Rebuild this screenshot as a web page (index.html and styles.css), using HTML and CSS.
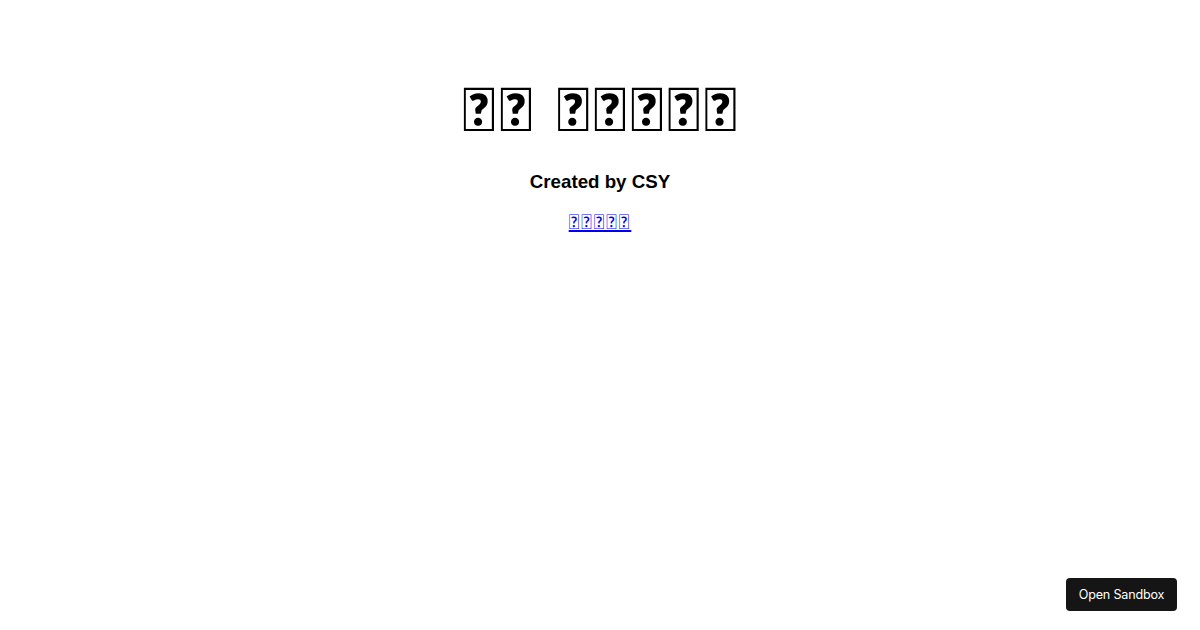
FILE: index.html
```html
<!DOCTYPE html>
<html lang="ko">
<head>
<meta charset="utf-8">
<title>Page</title>
<link rel="stylesheet" href="styles.css">
</head>
<body>
<main class="page">
  <h1 class="title">&#xE000;&#xE001; &#xE002;&#xE003;&#xE004;&#xE005;&#xE006;</h1>
  <h3 class="byline">Created by CSY</h3>
  <p class="links"><a class="link" href="#">&#xE007;&#xE008;&#xE009;&#xE00A;&#xE00B;</a></p>
</main>
<a class="sandbox-btn" href="#">Open Sandbox</a>
</body>
</html>
```
FILE: styles.css
```css
html, body {
  margin: 0;
  padding: 0;
  background: #ffffff;
}
body {
  font-family: "Liberation Sans", Arial, sans-serif;
  color: #000000;
}
.page {
  padding: 40px 8px 0;
  text-align: center;
}
.title {
  font-family: Lato, sans-serif;
  font-size: 60px;
  line-height: 72px;
  font-weight: bold;
  letter-spacing: 4px;
  word-spacing: 2px;
  margin: 32px 0 27px;
  padding-left: 4px;
}
.byline {
  font-size: 18.72px;
  font-weight: bold;
  margin: 0 0 16px;
}
.links {
  font-family: Lato, sans-serif;
  font-size: 20px;
  line-height: 24px;
  margin: 0;
}
.link {
  color: #0000ee;
  text-decoration: underline;
  letter-spacing: 1.9px;
}
.sandbox-btn {
  position: fixed;
  right: 23px;
  bottom: 19px;
  width: 111px;
  height: 33px;
  box-sizing: border-box;
  display: flex;
  align-items: center;
  justify-content: center;
  background: #151515;
  color: #ffffff;
  border-radius: 4px;
  font-family: Inter, "Liberation Sans", sans-serif;
  font-size: 12.6px;
  text-decoration: none;
  letter-spacing: -0.2px;
}
```
